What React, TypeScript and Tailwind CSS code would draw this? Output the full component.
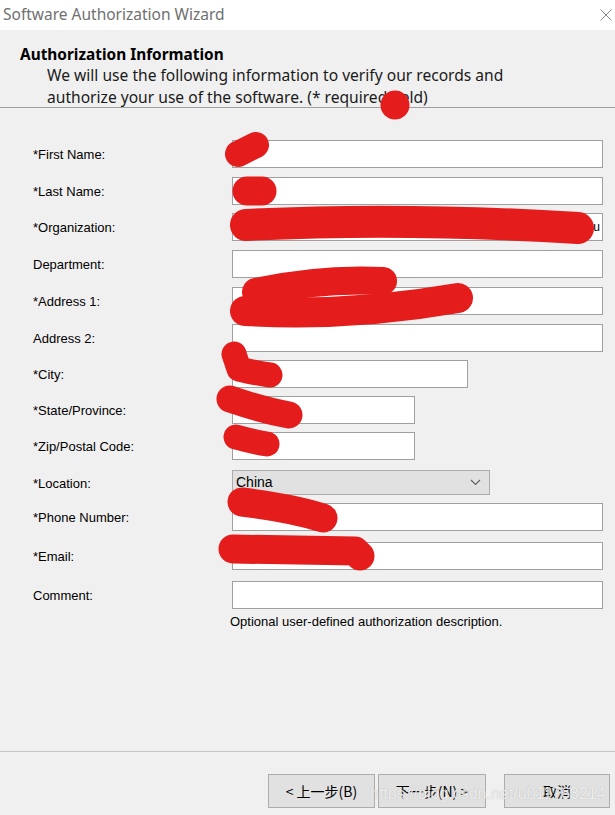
import React from "react";

type Row = {
  label: string;
  width: string;
  gap: string;
  kind?: "select";
  value?: string;
};

const rows: Row[] = [
  { label: "*First Name:", width: "w-[371px]", gap: "mt-[32px]" },
  { label: "*Last Name:", width: "w-[371px]", gap: "mt-[9px]" },
  { label: "*Organization:", width: "w-[371px]", gap: "mt-[8px]", value: "su" },
  { label: "Department:", width: "w-[371px]", gap: "mt-[9px]" },
  { label: "*Address 1:", width: "w-[371px]", gap: "mt-[9px]" },
  { label: "Address 2:", width: "w-[371px]", gap: "mt-[9px]" },
  { label: "*City:", width: "w-[236px]", gap: "mt-[8px]" },
  { label: "*State/Province:", width: "w-[183px]", gap: "mt-[8px]" },
  { label: "*Zip/Postal Code:", width: "w-[183px]", gap: "mt-[8px]" },
  { label: "*Location:", width: "w-[258px]", gap: "mt-[10px]", kind: "select", value: "China" },
  { label: "*Phone Number:", width: "w-[371px]", gap: "mt-[8px]" },
  { label: "*Email:", width: "w-[371px]", gap: "mt-[11px]" },
  { label: "Comment:", width: "w-[371px]", gap: "mt-[11px]" },
];

const labelFont = { fontFamily: '"Liberation Sans", Arial, sans-serif' };
const uiFont = { fontFamily: '"Noto Sans", "Open Sans", sans-serif' };
const cjkFont = { fontFamily: '"Noto Sans CJK SC", "Noto Sans", sans-serif' };

function Field({ row }: { row: Row }) {
  if (row.kind === "select") {
    return (
      <div
        className={`${row.width} shrink-0 h-[25px] border border-[#adadad] bg-[#e1e1e1] flex items-center justify-between pl-[3px] pr-[8px]`}
      >
        <span className="text-[14px] text-black">{row.value}</span>
        <svg width="11" height="7" viewBox="0 0 11 7">
          <path d="M1 1 L5.5 5.5 L10 1" stroke="#606060" strokeWidth="1.1" fill="none" />
        </svg>
      </div>
    );
  }
  return (
    <div
      className={`${row.width} shrink-0 h-[28px] border border-[#a0a0a0] bg-white flex items-center justify-end pr-[2px] overflow-hidden`}
    >
      {row.value && <span className="text-[12px] text-black">{row.value}</span>}
    </div>
  );
}

function Scribbles() {
  // red marker redactions painted over the form
  const red = "#e41c1c";
  return (
    <svg
      className="absolute left-0 top-0 pointer-events-none"
      width="615"
      height="815"
      viewBox="0 0 615 815"
    >
      <g stroke={red} strokeLinecap="round" strokeLinejoin="round" fill="none">
        <path d="M238 154 L256 145" strokeWidth="26" />
        <path d="M247 191 L262 191" strokeWidth="29" />
        <path d="M246 225 Q400 217 578 228" strokeWidth="32" />
        <path d="M256 292 Q320 278 383 281" strokeWidth="28" />
        <path d="M245 311 Q350 317 458 298" strokeWidth="30" />
        <path d="M234 354 L239 369 Q255 373 270 375" strokeWidth="25" />
        <path d="M230 399 Q262 410 289 415" strokeWidth="27" />
        <path d="M236 437 Q254 442 267 444" strokeWidth="25" />
        <path d="M242 502 Q292 508 323 518" strokeWidth="29" />
        <path d="M233 549 L355 551 L360 556" strokeWidth="29" />
      </g>
      <circle cx="395" cy="105" r="14.5" fill={red} />
    </svg>
  );
}

export default function App() {
  return (
    <div className="relative w-[615px] h-[815px] overflow-hidden bg-[#f0f0f0] flex flex-col">
      {/* title bar */}
      <div className="h-[30px] bg-white flex items-center justify-between pl-[3px] pr-[3px]">
        <span className="text-[15.5px] text-[#707070]" style={uiFont}>
          Software Authorization Wizard
        </span>
        <svg width="12" height="12" viewBox="0 0 12 12">
          <path d="M0.5 0.5 L11.5 11.5 M11.5 0.5 L0.5 11.5" stroke="#8a8a8a" strokeWidth="1" />
        </svg>
      </div>

      {/* header */}
      <div className="h-[78px] border-b border-[#a0a0a0] pl-[20px] pt-[15px]" style={uiFont}>
        <div className="text-[15.4px] font-bold leading-[20px] text-black">Authorization Information</div>
        <div className="pl-[27px] -mt-[1px] text-[15.6px] leading-[22px] text-[#1a1a1a]">
          <div>We will use the following information to verify our records and</div>
          <div>authorize your use of the software. (* required field)</div>
        </div>
      </div>

      {/* form */}
      <div className="flex-1 pl-[33px] pr-[12px]" style={labelFont}>
        {rows.map((row) => (
          <div key={row.label} className={`${row.gap} flex items-center`}>
            <div className="w-[199px] shrink-0 pt-[2px] text-[13px] text-black">{row.label}</div>
            <Field row={row} />
          </div>
        ))}
        <div className="pl-[197px] pt-[3px] text-[13px] text-black">
          Optional user-defined authorization description.
        </div>
      </div>

      {/* footer */}
      <div className="h-[64px] border-t border-[#c4c4c4] flex justify-end items-start pt-[22px] pr-[5px]" style={cjkFont}>
        <button className="w-[107px] h-[34px] border border-[#adadad] bg-[#e1e1e1] text-[14px] text-black">
          &lt;&nbsp;上一步(B)
        </button>
        <button className="ml-[3px] w-[108px] h-[34px] border border-[#adadad] bg-[#e1e1e1] text-[14px] text-black">
          下一步(N)&nbsp;&gt;
        </button>
        <button className="ml-[18px] w-[106px] h-[34px] border border-[#adadad] bg-[#e1e1e1] text-[14px] text-black">
          取消
        </button>
      </div>

      {/* watermark */}
      <div
        className="absolute left-[370px] top-[782px] text-[16px] text-white/80 pointer-events-none"
        style={{ ...labelFont, textShadow: "0 0 1px rgba(120,120,120,0.6)" }}
      >
        https://blog.csdn.net/u011763214
      </div>

      <Scribbles />
    </div>
  );
}
